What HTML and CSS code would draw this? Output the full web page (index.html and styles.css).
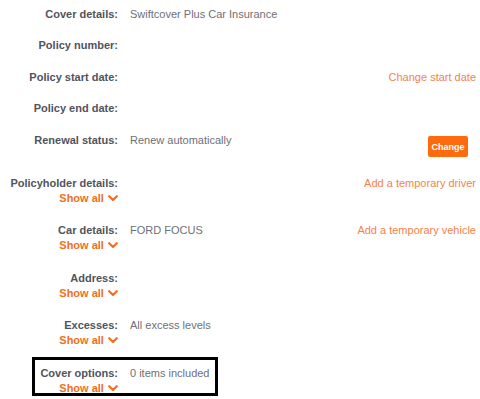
FILE: index.html
```html
<!DOCTYPE html>
<html>
<head>
<meta charset="utf-8">
<link rel="stylesheet" href="styles.css">
</head>
<body>
<div class="list">
  <div class="row">
    <div class="label">Cover details:</div>
    <div class="value">Swiftcover Plus Car Insurance</div>
  </div>
  <div class="row">
    <div class="label">Policy number:</div>
    <div class="value"></div>
  </div>
  <div class="row">
    <div class="label">Policy start date:</div>
    <div class="value"></div>
    <a class="action">Change start date</a>
  </div>
  <div class="row">
    <div class="label">Policy end date:</div>
    <div class="value"></div>
  </div>
  <div class="row renewal">
    <div class="label">Renewal status:</div>
    <div class="value">Renew automatically</div>
    <button class="btn">Change</button>
  </div>
  <div class="row expand">
    <div class="label">Policyholder details:<a class="show">Show all <svg class="chev" width="10" height="7" viewBox="0 0 10 7"><polyline points="1.2,1.2 5,5 8.8,1.2" fill="none" stroke="#f26f22" stroke-width="2.2" stroke-linecap="round" stroke-linejoin="round"/></svg></a></div>
    <div class="value"></div>
    <a class="action">Add a temporary driver</a>
  </div>
  <div class="row expand">
    <div class="label">Car details:<a class="show">Show all <svg class="chev" width="10" height="7" viewBox="0 0 10 7"><polyline points="1.2,1.2 5,5 8.8,1.2" fill="none" stroke="#f26f22" stroke-width="2.2" stroke-linecap="round" stroke-linejoin="round"/></svg></a></div>
    <div class="value">FORD FOCUS</div>
    <a class="action">Add a temporary vehicle</a>
  </div>
  <div class="row expand">
    <div class="label">Address:<a class="show">Show all <svg class="chev" width="10" height="7" viewBox="0 0 10 7"><polyline points="1.2,1.2 5,5 8.8,1.2" fill="none" stroke="#f26f22" stroke-width="2.2" stroke-linecap="round" stroke-linejoin="round"/></svg></a></div>
    <div class="value"></div>
  </div>
  <div class="row expand">
    <div class="label">Excesses:<a class="show">Show all <svg class="chev" width="10" height="7" viewBox="0 0 10 7"><polyline points="1.2,1.2 5,5 8.8,1.2" fill="none" stroke="#f26f22" stroke-width="2.2" stroke-linecap="round" stroke-linejoin="round"/></svg></a></div>
    <div class="value">All excess levels</div>
  </div>
  <div class="row expand highlighted">
    <span class="highlight"></span>
    <div class="label">Cover options:<a class="show">Show all <svg class="chev" width="10" height="7" viewBox="0 0 10 7"><polyline points="1.2,1.2 5,5 8.8,1.2" fill="none" stroke="#f26f22" stroke-width="2.2" stroke-linecap="round" stroke-linejoin="round"/></svg></a></div>
    <div class="value">0 items included</div>
  </div>
</div>
</body>
</html>
```
FILE: styles.css
```css
html, body {
  margin: 0;
  padding: 0;
  background: #ffffff;
}
body {
  font-family: "Liberation Sans", Arial, sans-serif;
  font-size: 11px;
  line-height: 15px;
  overflow: hidden;
}
.list {
  display: flex;
  flex-direction: column;
  gap: 16.5px;
  padding: 6.5px 4px 0 0;
}
.row {
  display: flex;
  align-items: flex-start;
  position: relative;
}
.row.expand + .row.expand {
  margin-top: 1px;
}
.label {
  width: 118px;
  flex: none;
  text-align: right;
  font-weight: bold;
  color: #50545d;
  white-space: nowrap;
}
.value {
  flex: 1;
  margin-left: 12px;
  color: #6e7076;
}
.action {
  color: #f5824a;
  white-space: nowrap;
}
.show {
  display: block;
  color: #f26f22;
  font-weight: bold;
}
.chev {
  vertical-align: 0px;
  margin-left: 1px;
}
.btn {
  margin: 3.5px 8px 2px 0;
  width: 40px;
  height: 21px;
  padding: 0;
  border: none;
  border-radius: 2px;
  background: #ff6a0d;
  color: #ffffff;
  font-family: "Liberation Sans", Arial, sans-serif;
  font-weight: bold;
  font-size: 9px;
}
.highlight {
  position: absolute;
  left: 32px;
  top: -8.5px;
  width: 186px;
  height: 39px;
  box-sizing: border-box;
  border: 3px solid #000000;
  pointer-events: none;
}
```
